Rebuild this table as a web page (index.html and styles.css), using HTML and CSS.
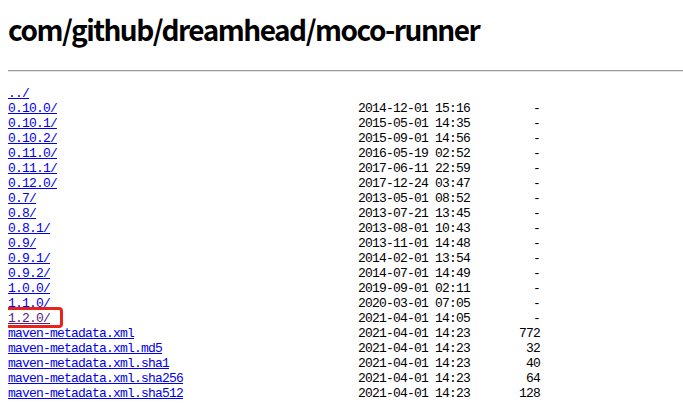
FILE: index.html
```html
<!DOCTYPE html>
<html>
<head>
<meta charset="utf-8">
<title>com/github/dreamhead/moco-runner</title>
<link rel="stylesheet" href="styles.css">
</head>
<body>
<h1 class="title">com/github/dreamhead/moco-runner</h1>
<hr class="rule">
<pre class="listing"><a href="#">../</a>
<a href="#">0.10.0/</a>                                           2014-12-01 15:16         -
<a href="#">0.10.1/</a>                                           2015-05-01 14:35         -
<a href="#">0.10.2/</a>                                           2015-09-01 14:56         -
<a href="#">0.11.0/</a>                                           2016-05-19 02:52         -
<a href="#">0.11.1/</a>                                           2017-06-11 22:59         -
<a href="#">0.12.0/</a>                                           2017-12-24 03:47         -
<a href="#">0.7/</a>                                              2013-05-01 08:52         -
<a href="#">0.8/</a>                                              2013-07-21 13:45         -
<a href="#">0.8.1/</a>                                            2013-08-01 10:43         -
<a href="#">0.9/</a>                                              2013-11-01 14:48         -
<a href="#">0.9.1/</a>                                            2014-02-01 13:54         -
<a href="#">0.9.2/</a>                                            2014-07-01 14:49         -
<a href="#">1.0.0/</a>                                            2019-09-01 02:11         -
<a href="#">1.1.0/</a>                                            2020-03-01 07:05         -
<span class="marked"><a class="visited" href="#">1.2.0/</a></span>                                            2021-04-01 14:05         -
<a href="#">maven-metadata.xml</a>                                2021-04-01 14:23       772
<a href="#">maven-metadata.xml.md5</a>                            2021-04-01 14:23        32
<a href="#">maven-metadata.xml.sha1</a>                           2021-04-01 14:23        40
<a href="#">maven-metadata.xml.sha256</a>                         2021-04-01 14:23        64
<a href="#">maven-metadata.xml.sha512</a>                         2021-04-01 14:23       128
</pre>
</body>
</html>
```
FILE: styles.css
```css
html, body {
  background: #ffffff;
}
body {
  margin: 0 0 0 8px;
  color: #000000;
}
.title {
  font-family: "Noto Sans CJK SC", "Lato", sans-serif;
  font-weight: 700;
  font-size: 28px;
  line-height: 40px;
  margin: 9px 0 0 0;
  letter-spacing: -1.5px;
}
.rule {
  border: none;
  border-top: 1px solid #9a9a9a;
  border-bottom: 1px solid #e4e4e4;
  height: 0;
  margin: 21px 0 0 0;
}
.listing {
  font-family: "Liberation Mono", "DejaVu Sans Mono", monospace;
  font-size: 13px;
  letter-spacing: -0.8px;
  line-height: 15px;
  margin: 14px 0 0 0;
}
.listing a {
  color: #0000ee;
  text-decoration: underline;
}
.listing a.visited {
  color: #551a8b;
}
.marked {
  position: relative;
}
.marked::after {
  content: "";
  position: absolute;
  left: -5px;
  top: -4px;
  width: 54px;
  height: 15px;
  border: 3px solid #e8231c;
  border-radius: 4px;
}
```
